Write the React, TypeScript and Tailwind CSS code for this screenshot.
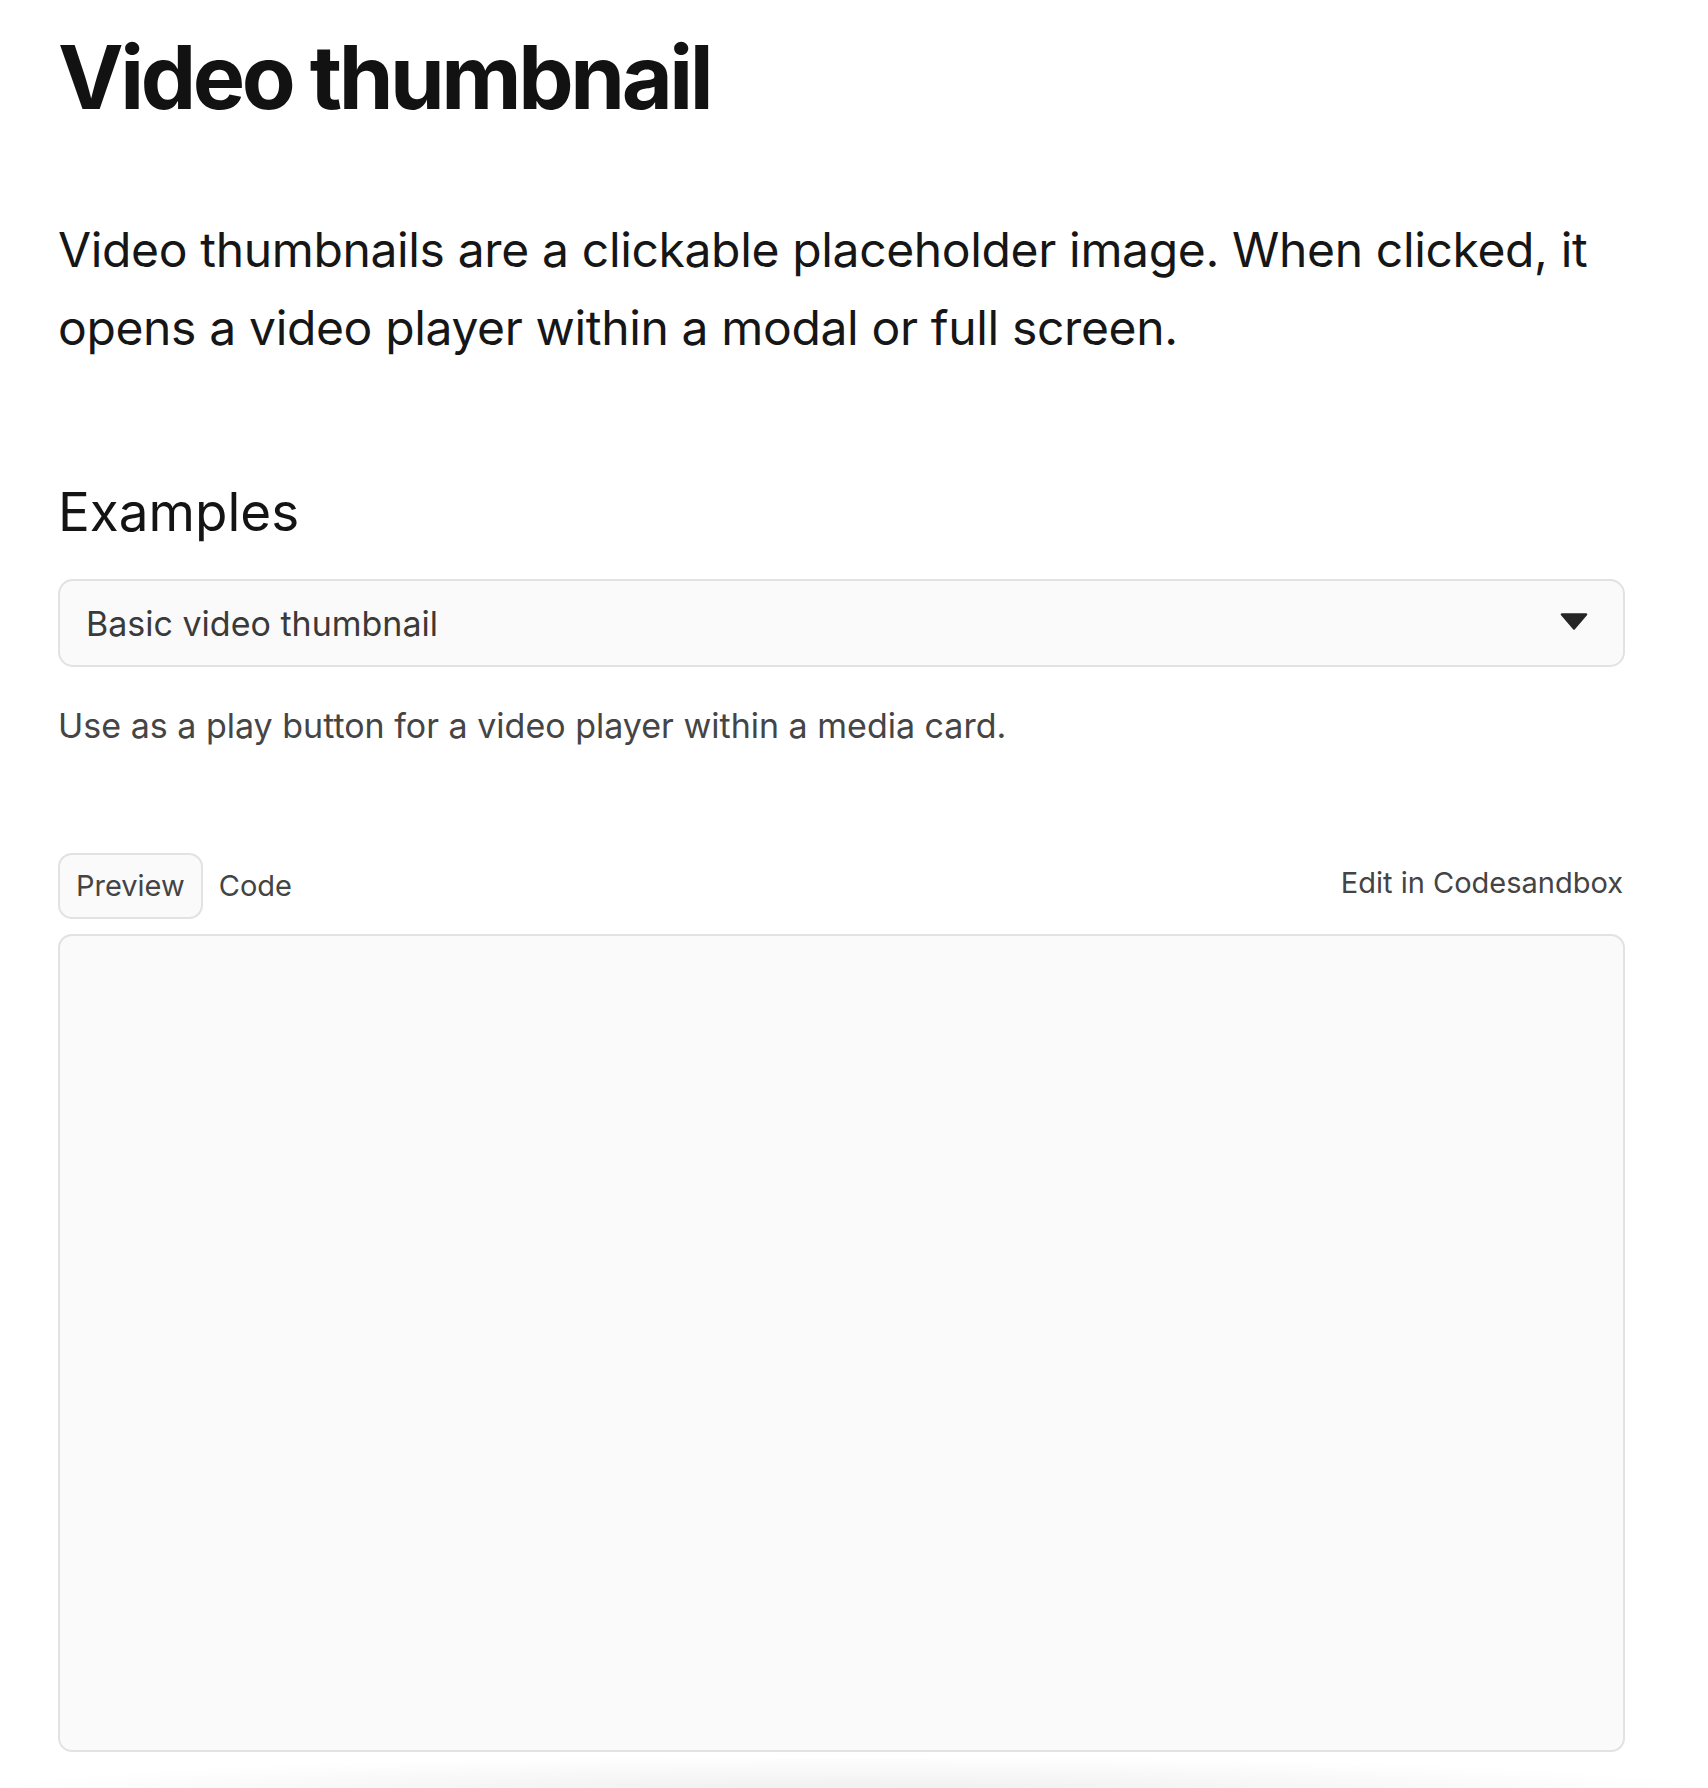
import React from "react";

export default function App() {
  return (
    <div className="min-h-[1788px] bg-white font-['Inter','Noto_Sans',sans-serif] overflow-hidden">
      <div className="ml-[58px] w-[1567px] pt-[33px]">
        <h1 className="text-[88px] leading-none font-bold tracking-[-0.039em] text-[#121212]">
          Video thumbnail
        </h1>

        <p className="mt-[90px] text-[48px] leading-[78px] tracking-[-0.35px] text-[#161616]">
          Video thumbnails are a clickable placeholder image. When clicked, it opens a video player within a modal or full screen.
        </p>

        <h2 className="mt-[113px] text-[53px] leading-[65px] text-[#141414]">Examples</h2>

        {/* example picker */}
        <div className="mt-[34px] h-[88px] rounded-[15px] border-2 border-[#e2e2e2] bg-[#fafafa] flex items-center justify-between pl-[26px] pr-[35px]">
          <span className="text-[34px] text-[#3a3a3a]">Basic video thumbnail</span>
          <svg width="28" height="17" viewBox="0 0 28 17" className="mt-[-3px]">
            <path d="M2 1.5 H26 L14 15.5 Z" fill="#262626" stroke="#262626" strokeWidth="2.5" strokeLinejoin="round" />
          </svg>
        </div>

        <p className="mt-[33px] text-[34px] leading-[51px] text-[#454545]">
          Use as a play button for a video player within a media card.
        </p>

        {/* tabs */}
        <div className="mt-[102px] flex items-center justify-between">
          <div className="flex items-center">
            <button className="h-[66px] px-[16px] rounded-[14px] border-2 border-[#e2e2e2] bg-[#fafafa] text-[29px] text-[#444]">
              Preview
            </button>
            <button className="ml-[16px] text-[29px] text-[#444]">Code</button>
          </div>
          <a className="mr-[2px] mb-[6px] text-[29px] text-[#444]">Edit in Codesandbox</a>
        </div>

        {/* preview panel */}
        <div className="mt-[15px] h-[818px] rounded-[14px] border-2 border-[#e2e2e2] bg-[#fafafa]" />
      </div>

      <div className="mt-[6px] h-[40px] bg-[radial-gradient(ellipse_at_bottom,#ececec,rgba(255,255,255,0)_75%)]" />
    </div>
  );
}
